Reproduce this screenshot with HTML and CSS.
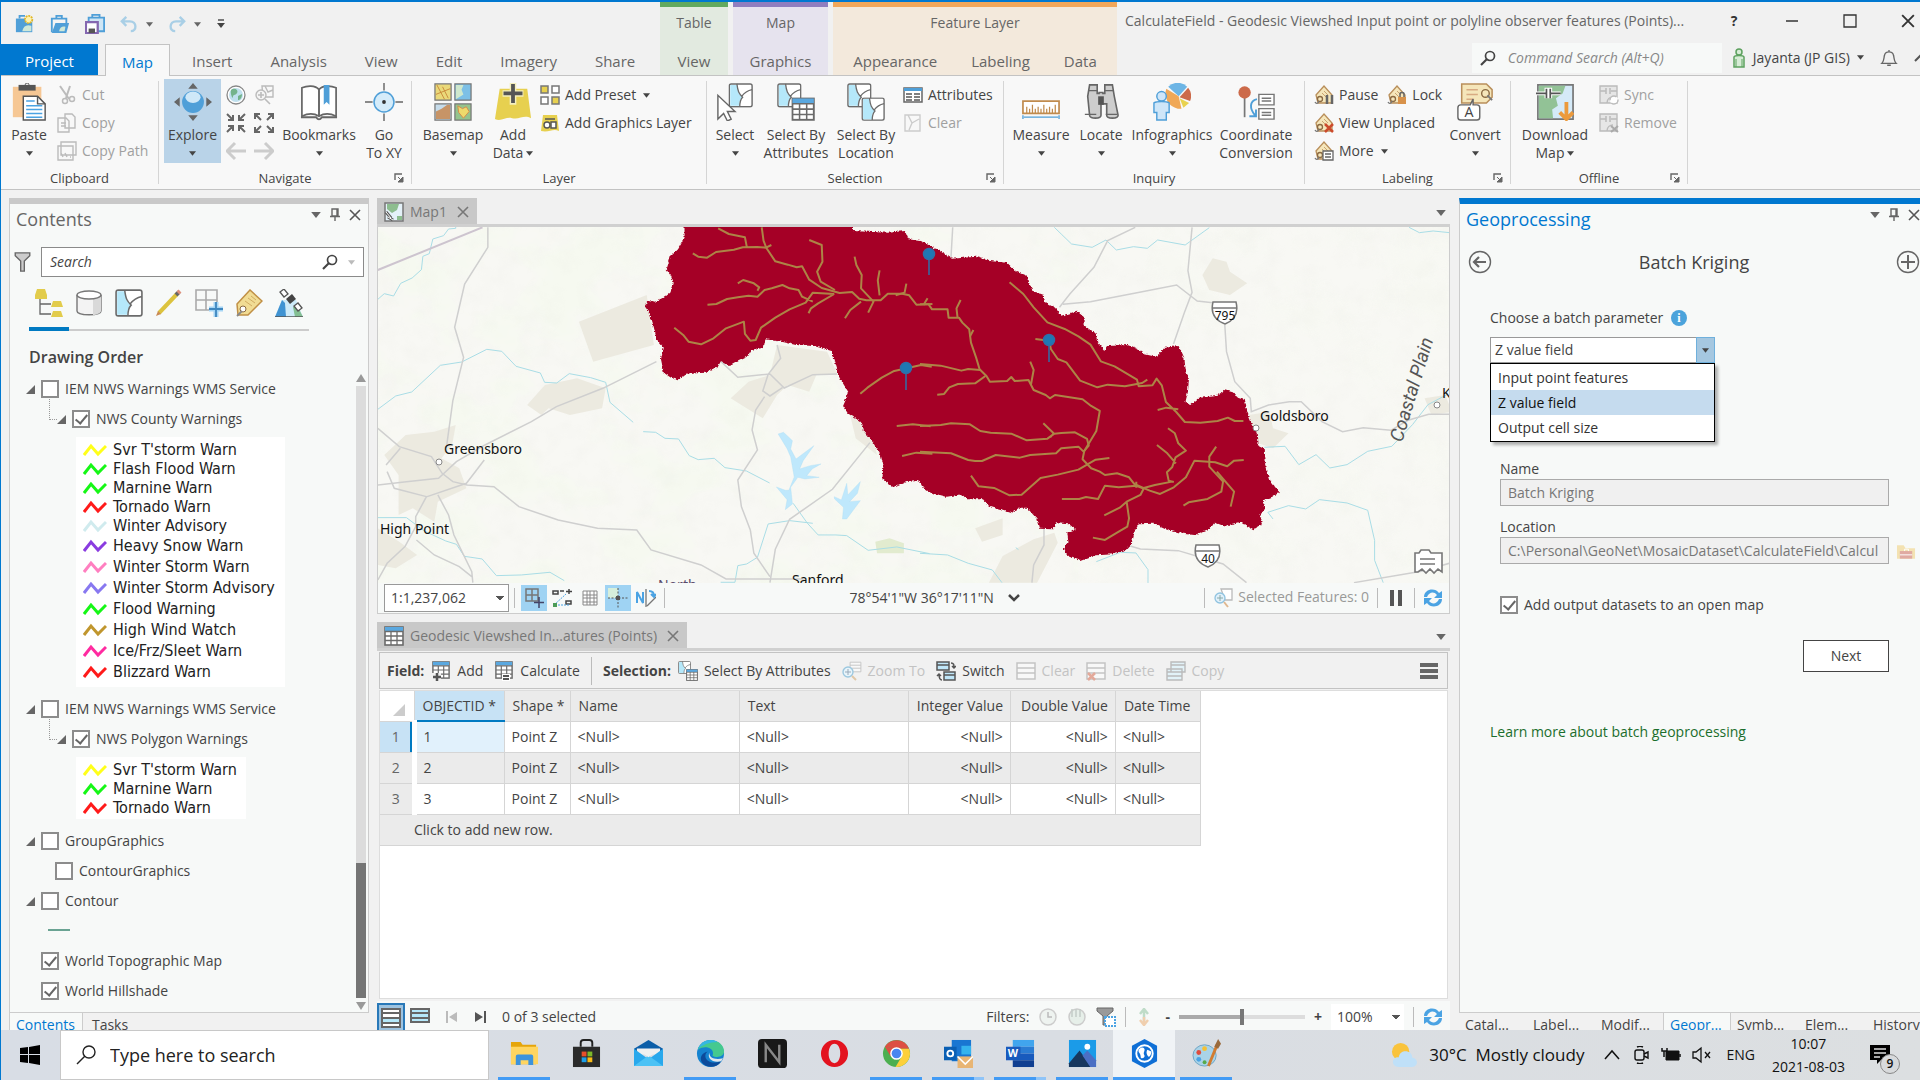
FILE: index.html
```
<!DOCTYPE html>
<html lang="en">
<head>
  <meta charset="UTF-8">
  <title>CalculateField - Geodesic Viewshed</title>
  <link rel="stylesheet" href="styles.css">
</head>
<body>

  <!-- shared icons -->
  <svg class="sprite" aria-hidden="true">
    <symbol id="caret" viewBox="0 0 8 5"><path d="M0 0h8L4 5z" fill="currentColor"/></symbol>
    <symbol id="launch" viewBox="0 0 10 10"><path d="M1 7V1h7" fill="none" stroke="#666" stroke-width="1.4"/><path d="M4 4l4 4M9 4v5H4z" fill="#666" stroke="#666"/></symbol>
    <symbol id="close" viewBox="0 0 12 12"><path d="M1 1l10 10M11 1L1 11" fill="none" stroke="currentColor" stroke-width="1.6"/></symbol>
    <symbol id="pin" viewBox="0 0 10 14"><path d="M2 1h6v7H2zM0 8.500h10M5 8v5M7 1v7" fill="none" stroke="#666" stroke-width="1.4"/></symbol>
    <symbol id="search" viewBox="0 0 16 16"><circle cx="10" cy="6" r="4.500" fill="none" stroke="currentColor" stroke-width="1.700"/><path d="M7 9l-6 6" stroke="currentColor" stroke-width="2.200"/></symbol>
    <symbol id="sheet" viewBox="0 0 26 26"><rect x="1" y="1" width="24" height="24" rx="2" fill="#fff" stroke="#6b6b6b" stroke-width="1.500"/><path d="M2 2h7c1 8 2 10 6 13-4 3-3 6-3 9H2z" fill="#b5e8fa"/><path d="M9 1c1 8 2 10 6 14-3 3-3 6-3 10M14 14c3-4 6-6 11-7" fill="none" stroke="#6b6b6b" stroke-width="1.400"/></symbol>
    <symbol id="grid" viewBox="0 0 20 20"><rect x="1" y="1" width="18" height="18" fill="#fff" stroke="#6b6b6b" stroke-width="1.600"/><path d="M1 1h18v4H1z" fill="#5aa8e0"/><path d="M1 5.500h18M1 10h18M1 14.500h18M7 5v14M13 5v14" stroke="#6b6b6b" stroke-width="1.300"/></symbol>
    <symbol id="rows" viewBox="0 0 20 20"><path d="M1 2h18v16H1zM1 7h18M1 12h18" fill="#f8f8f8" stroke="currentColor" stroke-width="1.500"/></symbol>
    <symbol id="tag" viewBox="0 0 20 20"><path d="M2 10L10 1l8 9v8H4z" fill="#f5e6ba" stroke="#b98f5b" stroke-width="1.300"/><path d="M8 8l5 5M10 6l4 4" stroke="#c9a36f"/><circle cx="6" cy="14" r="2.500" fill="#f5e6ba" stroke="#8b6a42" stroke-width="1.300"/><path d="M5 16c-1 3-3 3-4 1" fill="none" stroke="#777" stroke-width="1.300"/></symbol>
    <symbol id="refresh" viewBox="0 0 20 20"><path d="M1 9c0-8 11-10 15-4l3-2v7h-8l3-3C11 3 6 4 4 9z" fill="#4ba3e3"/><path d="M19 11c0 8-11 10-15 4l-3 2v-7h8l-3 3c3 4 8 3 10-2z" fill="#4ba3e3"/></symbol>
    <symbol id="zig" viewBox="0 0 24 14"><path d="M1 12L8 3l7 8 8-8" fill="none" stroke="currentColor" stroke-width="3"/></symbol>
    <symbol id="open" viewBox="0 0 9 9"><path d="M9 0v9H0z" fill="#666"/></symbol>
    <symbol id="offmap" viewBox="0 0 20 20"><path d="M1 1h17v17H1z" fill="#e6e6e6" stroke="#bbb" stroke-width="1.400"/><path d="M1 6h6M12 6h6M7 3v6M11 3v6M8 18c0-4 3-6 6-6" fill="none" stroke="#bbb" stroke-width="1.500"/></symbol>
  </svg>

  <div class="app">

    <header class="titlebar">
      <div class="title-left">
        <div class="quick">
          <button aria-label="New project"><svg class="i20" viewBox="0 0 22 22"><path d="M1 5h18v15H1z" fill="#4f9fd8"/><path d="M5 5V2h6" fill="none" stroke="#4f9fd8" stroke-width="2"/><path d="M8 19c1-6 5-8 10-6v6z" fill="#cfe8d8"/><circle cx="15" cy="6" r="4" fill="#fff3b0" stroke="#e0b52a" stroke-width="2" stroke-dasharray="2 1"/></svg></button>
          <button aria-label="Open project"><svg class="i20" viewBox="0 0 22 22"><path d="M2 20V5h16v5" fill="#f4f4f4" stroke="#4f9fd8" stroke-width="2"/><path d="M7 5V2h6v3" fill="none" stroke="#4f9fd8" stroke-width="2"/><path d="M2 21l4-11h15l-3 11z" fill="#4f9fd8"/><path d="M10 19c1-5 4-6 7-5l-1 5z" fill="#cfe8d8"/></svg></button>
          <button aria-label="Save project"><svg class="i20" viewBox="0 0 22 22"><path d="M4 4h17v15H4z" fill="#cfe6f5" stroke="#4f9fd8" stroke-width="2"/><path d="M8 4V1h8v3" fill="none" stroke="#4f9fd8" stroke-width="2"/><path d="M1 9h13v12H1z" fill="#fff" stroke="#8467b0" stroke-width="2.500"/><path d="M4 16h7v5H4z" fill="#555"/></svg></button>
          <button aria-label="Undo"><svg class="i18" viewBox="0 0 20 20"><path d="M7 2L2 7l5 5M2 7h9c8 0 8 11 1 11" fill="none" stroke="#a9cfe6" stroke-width="2.600"/></svg><svg class="caret"><use href="#caret"/></svg></button>
          <button aria-label="Redo"><svg class="i18" viewBox="0 0 20 20"><path d="M13 2l5 5-5 5M18 7H9c-8 0-8 11-1 11" fill="none" stroke="#a9cfe6" stroke-width="2.600"/></svg><svg class="caret"><use href="#caret"/></svg></button>
          <button aria-label="Customize"><svg class="i10" viewBox="0 0 10 10"><path d="M2 1h6" stroke="#444" stroke-width="1.400"/><path d="M1 4h8L5 9z" fill="#444"/></svg></button>
        </div>
        <nav class="tabs">
          <button class="tab tab-project">Project</button>
          <button class="tab tab-active">Map</button>
          <button class="tab">Insert</button>
          <button class="tab">Analysis</button>
          <button class="tab">View</button>
          <button class="tab">Edit</button>
          <button class="tab">Imagery</button>
          <button class="tab">Share</button>
        </nav>
      </div>
      <div class="context context-table">
        <span>Table</span>
        <div class="context-tabs"><button class="tab">View</button></div>
      </div>
      <div class="context context-map">
        <span>Map</span>
        <div class="context-tabs"><button class="tab">Graphics</button></div>
      </div>
      <div class="context context-layer">
        <span>Feature Layer</span>
        <div class="context-tabs">
          <button class="tab">Appearance</button>
          <button class="tab">Labeling</button>
          <button class="tab">Data</button>
        </div>
      </div>
      <div class="title-right">
        <div class="caption">
          <h1>CalculateField - Geodesic Viewshed Input point or polyline observer features (Points)...</h1>
          <button class="help">?</button>
          <button aria-label="Minimize"><svg class="i14" viewBox="0 0 14 14"><path d="M1 7h12" stroke="#333" stroke-width="1.500"/></svg></button>
          <button aria-label="Maximize"><svg class="i14" viewBox="0 0 14 14"><path d="M1 1h12v12H1z" fill="none" stroke="#333" stroke-width="1.300"/></svg></button>
          <button aria-label="Close"><svg class="i14"><use href="#close"/></svg></button>
        </div>
        <div class="account">
          <label class="command"><svg class="i16"><use href="#search"/></svg><input type="text" placeholder="Command Search (Alt+Q)" aria-label="Command Search"></label>
          <button class="user"><svg class="user-icon" viewBox="0 0 14 20"><circle cx="7" cy="4" r="3" fill="#d7ecd6" stroke="#5da15f" stroke-width="1.500"/><path d="M2 9c1-2 9-2 10 0v10H2z" fill="#d7ecd6" stroke="#5da15f" stroke-width="1.500"/><path d="M4 11v8M10 11v8" stroke="#5da15f"/></svg>Jayanta (JP GIS)<svg class="caret"><use href="#caret"/></svg></button>
          <button aria-label="Notifications"><svg class="i18" viewBox="0 0 18 20"><path d="M1 16h16c-3-3-2-6-3-9-1-5-9-5-10 0-1 3 0 6-3 9zM7 18h4M9 1v2" fill="none" stroke="#666" stroke-width="1.500"/></svg></button>
          <svg class="i10" viewBox="0 0 10 10"><path d="M1 8l6-6 6 6" fill="none" stroke="#555" stroke-width="2"/></svg>
        </div>
      </div>
    </header>

    <section class="ribbon">
      <div class="group g-clipboard">
        <div class="tools">
          <button class="big w-56"><svg class="i40" viewBox="0 0 40 40"><path d="M3 4h30v32H3z" fill="#f6c794"/><path d="M9 2h18v6H9z" fill="#555"/><circle cx="18" cy="2" r="2" fill="none" stroke="#555"/><path d="M14 14h15l8 8v17H14z" fill="#fff" stroke="#555" stroke-width="1.500"/><path d="M29 14v8h8" fill="none" stroke="#555" stroke-width="1.500"/><path d="M17 19h9M17 24h17M17 28h17M17 32h17M17 36h17" stroke="#4ba3e3" stroke-width="1.600"/></svg>Paste<svg class="caret"><use href="#caret"/></svg></button>
          <div class="stack">
            <button class="small off"><svg class="i20" viewBox="0 0 20 20"><path d="M3 1l9 13M13 1L9 13" stroke="#bbb" stroke-width="2"/><circle cx="8" cy="16" r="2.500" fill="none" stroke="#bbb" stroke-width="1.500"/><circle cx="15" cy="14" r="2.500" fill="none" stroke="#bbb" stroke-width="1.500"/></svg>Cut</button>
            <button class="small off"><svg class="i20" viewBox="0 0 20 20"><path d="M8 1h7l3 3v11H8zM1 5h8l3 3v11H1zM4 10h5M4 13h5" fill="#f8f8f8" stroke="#bbb" stroke-width="1.400"/></svg>Copy</button>
            <button class="small off"><svg class="i20" viewBox="0 0 20 20"><path d="M4 1h15v13H4zM1 5h15v14H1zM4 12l2 4M8 12l2 4M13 16h1" fill="#f8f8f8" stroke="#bbb" stroke-width="1.400"/></svg>Copy Path</button>
          </div>
        </div>
        <footer>Clipboard</footer>
      </div>

      <div class="group g-navigate">
        <div class="tools">
          <button class="big w-58 pressed"><svg class="i40" viewBox="0 0 40 40"><path d="M15 6l5-6 5 6zM15 34l5 6 5-6zM6 15l-6 5 6 5zM34 15l6 5-6 5z" fill="#666"/><circle cx="20" cy="20" r="11.500" fill="#4f9fd8"/><ellipse cx="20" cy="15" rx="8" ry="6" fill="#cfe8f8"/></svg>Explore<svg class="caret"><use href="#caret"/></svg></button>
          <div class="navgrid">
            <button aria-label="Full extent"><svg class="i20" viewBox="0 0 20 20"><circle cx="10" cy="10" r="9" fill="#fff" stroke="#888" stroke-width="1.300"/><circle cx="10" cy="10" r="7" fill="#bfe0ee"/><path d="M5 5c3-3 8 0 6 3s-4 1-4 4-3-3-2-7zM12 11l4-2c0 4-2 6-4 6z" fill="#73b38b"/></svg></button>
            <button aria-label="Zoom to selection"><svg class="i20" viewBox="0 0 20 20"><path d="M8 1h11v11H9zM11 1l3 6 5-2" fill="none" stroke="#bbb" stroke-width="1.400"/><circle cx="7" cy="10" r="5" fill="#f4f4f4" stroke="#bbb" stroke-width="1.400"/><path d="M4 10h6M7 7v6M11 14l5 5" stroke="#bbb" stroke-width="1.600"/></svg></button>
            <button aria-label="Fixed zoom in"><svg class="i20" viewBox="0 0 20 20"><path d="M1 1l6 6M7 2v5H2M19 1l-6 6M13 2v5h5M1 19l6-6M7 18v-5H2M19 19l-6-6M13 18v-5h5" fill="none" stroke="#666" stroke-width="2"/></svg></button>
            <button aria-label="Fixed zoom out"><svg class="i20" viewBox="0 0 20 20"><path d="M1 1l6 6M1 6V1h5M19 1l-6 6M14 1h5v5M1 19l6-6M1 14v5h5M19 19l-6-6M19 14v5h-5" fill="none" stroke="#666" stroke-width="2"/></svg></button>
            <button aria-label="Previous extent"><svg class="i20" viewBox="0 0 20 20"><path d="M20 10H2M9 2l-8 8 8 8" fill="none" stroke="#ccc" stroke-width="3"/></svg></button>
            <button aria-label="Next extent"><svg class="i20" viewBox="0 0 20 20"><path d="M0 10h18M11 2l8 8-8 8" fill="none" stroke="#ccc" stroke-width="3"/></svg></button>
          </div>
          <button class="big w-80"><svg class="i40" viewBox="0 0 40 40"><path d="M20 7C16 2 7 3 2 5v30c6-3 13-3 18 0 5-3 12-3 18 0V5C33 3 24 2 20 7zv28" fill="#fff" stroke="#666" stroke-width="1.800"/><path d="M20 6v28" stroke="#666" stroke-width="1.500"/><path d="M25 2h6v21l-3-3-3 3z" fill="#4f9fd8"/><path d="M1 36h16c2 3 4 3 6 0h16" fill="none" stroke="#666" stroke-width="2"/></svg>Bookmarks<svg class="caret"><use href="#caret"/></svg></button>
          <button class="big w-50"><svg class="i40" viewBox="0 0 40 40"><path d="M20 0v8M20 32v8M0 20h8M32 20h8" stroke="#666" stroke-width="1.500"/><circle cx="20" cy="20" r="10.500" fill="#d5ecfa" stroke="#4f9fd8" stroke-width="1.600"/><circle cx="20" cy="20" r="2" fill="#333"/></svg>Go<br>To XY</button>
        </div>
        <footer>Navigate<svg class="launch"><use href="#launch"/></svg></footer>
      </div>

      <div class="group g-layer">
        <div class="tools">
          <button class="big w-74"><svg class="i40" viewBox="0 0 40 40"><g stroke="#777" stroke-width="1.300"><path d="M1 1h17v17H1z" fill="#ead97a"/><path d="M22 1h17v17H22z" fill="#7dc0e6"/><path d="M1 22h17v17H1z" fill="#c6dceb"/><path d="M22 22h17v17H22z" fill="#94c48d"/></g><path d="M3 2l8 15M2 12l15-6M9 4l6 12" stroke="#c98a3b" fill="none"/><path d="M23 2h8l-2 5 2 5-8 5z" fill="#cfe8cd"/><path d="M2 38V30l6-3 6-4h3v15z" fill="#c79467"/><path d="M25 24l5 3 4-2 3 5-6 7-5-6z" fill="#eeda6b" stroke="#d48a4c"/></svg>Basemap<svg class="caret"><use href="#caret"/></svg></button>
          <button class="big w-46"><svg class="i40" viewBox="0 0 40 40"><path d="M6 6h29l4 31c-8-4-12 2-20 0-6-2-11 4-18 1z" fill="#e7d04f"/><path d="M20 0v23M9 11h22" stroke="#f4eebc" stroke-width="7"/><path d="M20 1v20M10 11h20" stroke="#555" stroke-width="4"/></svg>Add<br><span>Data<svg class="caret"><use href="#caret"/></svg></span></button>
          <div class="stack stack-right">
            <button class="small"><svg class="i20" viewBox="0 0 20 20"><path d="M1 1h7v7H1zM12 12h7v7h-7z" fill="#e7d04f" stroke="#777" stroke-width="1.500"/><path d="M12 1h7v7h-7zM1 12h7v7H1z" fill="#fff" stroke="#777" stroke-width="1.500"/></svg>Add Preset<svg class="caret"><use href="#caret"/></svg></button>
            <button class="small"><svg class="i20" viewBox="0 0 20 20"><path d="M3 2h14l2 16c-6-3-10 2-18 0z" fill="#e7d04f"/><path d="M5 6h10M11 9h5v6h-5z" fill="#fff" stroke="#555" stroke-width="1.500"/><circle cx="7" cy="12" r="3" fill="#fff" stroke="#555" stroke-width="1.400"/></svg>Add Graphics Layer</button>
          </div>
        </div>
        <footer>Layer</footer>
      </div>

      <div class="group g-selection">
        <div class="tools">
          <button class="big w-56"><svg class="i40" viewBox="0 0 40 40"><use href="#sheet" x="13" y="0" width="26" height="26"/><path d="M2 13v25l6-6 4 8 4-2-4-8h8z" fill="#fff" stroke="#666" stroke-width="1.500"/></svg>Select<svg class="caret"><use href="#caret"/></svg></button>
          <button class="big w-66"><svg class="i40" viewBox="0 0 40 40"><use href="#sheet" x="0" y="0" width="26" height="26"/><use href="#grid" x="15" y="15" width="25" height="25"/></svg>Select By<br>Attributes</button>
          <button class="big w-74"><svg class="i40" viewBox="0 0 40 40"><use href="#sheet" x="0" y="0" width="26" height="26"/><use href="#sheet" x="15" y="15" width="25" height="25"/></svg>Select By<br>Location</button>
          <div class="stack">
            <button class="small"><svg class="i20" viewBox="0 0 20 20"><path d="M1 3h18v14H1z" fill="#fff" stroke="#666" stroke-width="1.500"/><path d="M1 3h18v3H1z" fill="#4f9fd8"/><path d="M3 9h6M11 9h6M3 12h6M11 12h6M3 15h6M11 15h6" stroke="#555" stroke-width="1.500"/></svg>Attributes</button>
            <button class="small off"><svg class="i20" viewBox="0 0 20 20"><path d="M2 2h15v16H2zM5 2l4 8-3 7M9 10l7-4" fill="none" stroke="#ccc" stroke-width="1.400"/></svg>Clear</button>
          </div>
        </div>
        <footer>Selection<svg class="launch"><use href="#launch"/></svg></footer>
      </div>

      <div class="group g-inquiry">
        <div class="tools">
          <button class="big w-66"><svg class="i40" viewBox="0 0 40 40"><path d="M1 19h38v13H1z" fill="#fff" stroke="#c08b4e" stroke-width="1.800"/><path d="M5 32v-7M8 32v-5M11 32v-9M14 32v-5M17 32v-7M20 32v-5M23 32v-9M26 32v-5M29 32v-7M32 32v-5M35 32v-9" stroke="#c08b4e" stroke-width="1.300"/><path d="M1 34v4M39 34v4M2 36h36" stroke="#4f9fd8" stroke-width="1.400"/></svg>Measure<svg class="caret"><use href="#caret"/></svg></button>
          <button class="big w-54"><svg class="i40" viewBox="0 0 40 40"><path d="M8 2h8v9h2v-1h4v1h2V2h8l2 12 4 20c0 4-12 4-12 0V22h-6v12c0 4-12 4-12 0L6 14z" fill="#cdcdcd" stroke="#666" stroke-width="1.700"/><path d="M17 14h6v9h-6z" fill="#555"/><path d="M7 8h9M24 8h9M3 33h12M25 33h12" stroke="#666" stroke-width="1.500"/></svg>Locate<svg class="caret"><use href="#caret"/></svg></button>
          <button class="big w-90"><svg class="i40" viewBox="0 0 40 40"><path d="M27 14L16 4a14 14 0 0 1 20 0z" fill="#6db5e5"/><path d="M27 14L14 6a16 16 0 0 0 12 21l4 0z" fill="#f0a857"/><path d="M28 15l9-10a14 14 0 0 1 2 14z" fill="#cc6a4a"/><path d="M28 16l10 5-6 5z" fill="#e9d24f"/><g fill="#cfe6f8" stroke="#4f9fd8" stroke-width="1.500"><circle cx="9" cy="14" r="5"/><path d="M1 21c3-2 13-2 16 0v10h-3v8H4v-8H1z"/></g></svg>Infographics<svg class="caret"><use href="#caret"/></svg></button>
          <button class="big w-80"><svg class="i40" viewBox="0 0 40 40"><path d="M8 12v24" stroke="#777" stroke-width="1.800"/><circle cx="8" cy="10" r="6.500" fill="#cc6a4a"/><path d="M23 12h16v11H23zM23 27h16v11H23zM26 16h10M26 19h10M26 31h10M26 34h10" fill="#fff" stroke="#777" stroke-width="1.500"/><path d="M21 17c-8 2-8 10-2 17m1-6v7h-7" fill="none" stroke="#4f9fd8" stroke-width="2"/></svg>Coordinate<br>Conversion</button>
        </div>
        <footer>Inquiry</footer>
      </div>

      <div class="group g-labeling">
        <div class="tools">
          <div class="stack">
            <div class="pair">
              <button class="small"><svg class="i20" viewBox="0 0 20 20"><use href="#tag"/><path d="M13 10v9M18 10v9" stroke="#666" stroke-width="2.500"/></svg>Pause</button>
              <button class="small"><svg class="i20" viewBox="0 0 20 20"><use href="#tag"/><path d="M11 12h8v7h-8z" fill="#d8924a"/><path d="M13 12V9c0-2 4-2 4 0v3" fill="none" stroke="#666" stroke-width="1.500"/></svg>Lock</button>
            </div>
            <button class="small"><svg class="i20" viewBox="0 0 20 20"><use href="#tag"/><path d="M11 11l8 8M19 11l-8 8" stroke="#cc4b2c" stroke-width="2.500"/></svg>View Unplaced</button>
            <button class="small"><svg class="i20" viewBox="0 0 20 20"><use href="#tag"/><path d="M9 10h10v9H9zM11 13h6M11 16h6" fill="#fff" stroke="#666" stroke-width="1.300"/></svg>More<svg class="caret"><use href="#caret"/></svg></button>
          </div>
          <button class="big w-66"><svg class="i40" viewBox="0 0 40 40"><path d="M6 1h26l6 6v8l-6 6H6z" fill="#f5e6ba" stroke="#b98f5b" stroke-width="1.600"/><path d="M11 7h12M11 12h12M11 17h8" stroke="#d8aa82" stroke-width="1.600"/><circle cx="31" cy="11" r="4" fill="none" stroke="#8b6a42" stroke-width="1.500"/><path d="M33 13l5 5" stroke="#777" stroke-width="2"/><path d="M5 23h10l3-6v6h4q3 0 3 3v10q0 3-3 3H5q-3 0-3-3V26q0-3 3-3z" fill="#fff" stroke="#666" stroke-width="1.500"/><text x="9" y="36" class="glyph-a">A</text></svg>Convert<svg class="caret"><use href="#caret"/></svg></button>
        </div>
        <footer>Labeling<svg class="launch"><use href="#launch"/></svg></footer>
      </div>

      <div class="group g-offline">
        <div class="tools">
          <button class="big w-80"><svg class="i40" viewBox="0 0 40 40"><path d="M2 2h37v36H2z" fill="#d5eaf8" stroke="#777" stroke-width="1.800"/><path d="M3 3h28l-3 8-7 5 2 8-6 4 1 9H3z" fill="#92c296"/><path d="M0 11h10M16 11h10M11 5v11M15 5v11" stroke="#fff" stroke-width="4"/><path d="M0 11h11M15 11h11M11 6v10M15 6v10" stroke="#555" stroke-width="1.800"/><path d="M32 20v18M25 31l7 7 7-7" fill="none" stroke="#ec9a3c" stroke-width="4"/></svg>Download<br><span>Map<svg class="caret"><use href="#caret"/></svg></span></button>
          <div class="stack stack-right">
            <button class="small off"><svg class="i20" viewBox="0 0 20 20"><use href="#offmap"/><circle cx="15" cy="15" r="4" fill="#fff" stroke="#bbb" stroke-width="1.500" stroke-dasharray="9 3"/></svg>Sync</button>
            <button class="small off"><svg class="i20" viewBox="0 0 20 20"><use href="#offmap"/><path d="M12 13l7 6M19 13l-7 6" stroke="#aaa" stroke-width="2"/></svg>Remove</button>
          </div>
        </div>
        <footer>Offline<svg class="launch"><use href="#launch"/></svg></footer>
      </div>
    </section>

    <main class="workspace">

      <!-- Contents -->
      <aside class="pane contents">
        <div class="pane-body">
          <div class="pane-head"><h2>Contents</h2>
            <div class="pane-tools"><svg class="caret-lg"><use href="#caret"/></svg><svg class="pin"><use href="#pin"/></svg><svg class="i12"><use href="#close"/></svg></div>
          </div>
          <div class="filter-row">
            <svg class="funnel" viewBox="0 0 18 22"><path d="M1 1h16v3l-6 6v11H7V10L1 4z" fill="#ccc" stroke="#666" stroke-width="1.500"/></svg>
            <label class="searchbox"><input type="text" placeholder="Search" aria-label="Search contents"><svg class="i16"><use href="#search"/></svg><svg class="caret"><use href="#caret"/></svg></label>
          </div>
          <div class="views">
            <button class="on" aria-label="Drawing order"><svg class="i28" viewBox="0 0 28 28"><path d="M2 0h8l2 6v4H0V6zM18 12h8l2 6H16zM18 22h8l2 6H16z" fill="#e2cc4c"/><path d="M5 10v15h11M5 15h11" fill="none" stroke="#666" stroke-width="1.300"/></svg></button>
            <button aria-label="Data source"><svg class="i28" viewBox="0 0 28 28"><path d="M2 6v16c0 5 24 5 24 0V6" fill="#f3f3f3" stroke="#777" stroke-width="1.400"/><path d="M18 9c4 0 8-2 8-3v16c0 2-5 4-8 4z" fill="#d9d9d9"/><ellipse cx="14" cy="6" rx="12" ry="4" fill="#fff" stroke="#777" stroke-width="1.400"/></svg></button>
            <button aria-label="Selection"><svg class="i28"><use href="#sheet"/></svg></button>
            <button aria-label="Editing"><svg class="i28" viewBox="0 0 28 28"><path d="M4 24L22 5" stroke="#dcc33e" stroke-width="4"/><path d="M1 27l2-5 3 3z" fill="#c98b55"/><path d="M21 6l3-3" stroke="#666" stroke-width="4"/><path d="M23 4l2-2" stroke="#e0907c" stroke-width="4"/></svg></button>
            <button aria-label="Snapping"><svg class="i28" viewBox="0 0 28 28"><path d="M1 1h21v20H1zM11 1v20M1 11h21" fill="none" stroke="#aaa" stroke-width="1.600"/><path d="M14 20h14M21 13v15" stroke="#a6d6f5" stroke-width="5"/><path d="M14 20h14M21 13v15" stroke="#3f87bf" stroke-width="1.800"/></svg></button>
            <button aria-label="Labeling"><svg class="i28" viewBox="0 0 28 28"><path d="M2 15L15 1l12 11-14 14H3z" fill="#f1dc94" stroke="#c09046" stroke-width="1.500"/><path d="M10 12l7 5M13 9l7 5M16 7l5 4" stroke="#d1ac62"/><circle cx="8" cy="20" r="3" fill="#fff" stroke="#8b6a42"/><path d="M7 22l-5 5" stroke="#888" stroke-width="1.800"/></svg></button>
            <button aria-label="Imagery"><svg class="i28" viewBox="0 0 28 28"><path d="M7 11L0 28h28l-7-17z" fill="#cdeaf8"/><path d="M7 11L0 28h11l-1-14z" fill="#3f93d2"/><path d="M18 18l4-2 6 12h-8z" fill="#83bf93"/><path d="M0 28h28" stroke="#555" stroke-width="1.500"/><path d="M5 3l4-3 4 5-4 3zM19 17l4-3 4 5-4 3z" fill="#fff" stroke="#555" stroke-width="1.300"/><path d="M11 10l6-5 4 5-6 5z" fill="#444"/></svg></button>
          </div>
          <h3>Drawing Order</h3>
          <div class="tree-area">
            <ul class="tree">
              <li class="node"><svg class="open"><use href="#open"/></svg><label><input type="checkbox">IEM NWS Warnings WMS Service</label></li>
              <li class="node child"><svg class="open"><use href="#open"/></svg><label><input type="checkbox" checked>NWS County Warnings</label></li>
              <li>
                <ul class="legend">
                  <li class="yellow"><svg><use href="#zig"/></svg>Svr T'storm Warn</li>
                  <li class="green"><svg><use href="#zig"/></svg>Flash Flood Warn</li>
                  <li class="green"><svg><use href="#zig"/></svg>Marnine Warn</li>
                  <li class="red"><svg><use href="#zig"/></svg>Tornado Warn</li>
                  <li class="ice"><svg><use href="#zig"/></svg>Winter Advisory</li>
                  <li class="purple tall"><svg><use href="#zig"/></svg>Heavy Snow Warn</li>
                  <li class="pink tall"><svg><use href="#zig"/></svg>Winter Storm Warn</li>
                  <li class="violet tall"><svg><use href="#zig"/></svg>Winter Storm Advisory</li>
                  <li class="green tall"><svg><use href="#zig"/></svg>Flood Warning</li>
                  <li class="gold tall"><svg><use href="#zig"/></svg>High Wind Watch</li>
                  <li class="magenta tall"><svg><use href="#zig"/></svg>Ice/Frz/Sleet Warn</li>
                  <li class="red tall"><svg><use href="#zig"/></svg>Blizzard Warn</li>
                </ul>
              </li>
              <li class="node"><svg class="open"><use href="#open"/></svg><label><input type="checkbox">IEM NWS Warnings WMS Service</label></li>
              <li class="node child"><svg class="open"><use href="#open"/></svg><label><input type="checkbox" checked>NWS Polygon Warnings</label></li>
              <li>
                <ul class="legend legend-short">
                  <li class="yellow"><svg><use href="#zig"/></svg>Svr T'storm Warn</li>
                  <li class="green"><svg><use href="#zig"/></svg>Marnine Warn</li>
                  <li class="red"><svg><use href="#zig"/></svg>Tornado Warn</li>
                </ul>
              </li>
              <li class="node"><svg class="open"><use href="#open"/></svg><label><input type="checkbox">GroupGraphics</label></li>
              <li class="node leaf"><label><input type="checkbox">ContourGraphics</label></li>
              <li class="node"><svg class="open"><use href="#open"/></svg><label><input type="checkbox">Contour</label></li>
              <li class="node"><span class="line-symbol"></span></li>
              <li class="node flat"><label><input type="checkbox" checked>World Topographic Map</label></li>
              <li class="node flat"><label><input type="checkbox" checked>World Hillshade</label></li>
            </ul>
            <div class="scroll"><i class="up"></i><span class="track"><span class="thumb"></span></span><i class="down"></i></div>
          </div>
        </div>
        <nav class="pane-tabs"><button class="on">Contents</button><button>Tasks</button></nav>
      </aside>

      <!-- Map and attribute table -->
      <div class="center">
        <section class="doc">
          <div class="doc-tabs">
            <button class="doc-tab"><svg class="i20" viewBox="0 0 20 20"><path d="M1 1h18v18H1z" fill="#e4f1f8" stroke="#777" stroke-width="1.500"/><path d="M3 2h12l-2 6-5 3-5-4zM13 14h5v4h-5z" fill="#8dbd8f"/><path d="M2 10l5 6M4 15l5 3" stroke="#555" stroke-width="3"/><path d="M2 10l5 6M4 15l5 3" stroke="#fff"/></svg>Map1<svg class="i12"><use href="#close"/></svg></button>
            <svg class="caret-lg"><use href="#caret"/></svg>
          </div>
          <div class="map">
            <svg class="map-canvas" viewBox="0 0 1072 356" preserveAspectRatio="xMinYMin slice">
              <defs>
                <filter id="rough" x="-2%" y="-2%" width="104%" height="104%"><feTurbulence type="turbulence" baseFrequency="0.12" numOctaves="2" seed="4"/><feDisplacementMap in="SourceGraphic" scale="7" xChannelSelector="R" yChannelSelector="G"/></filter>
                <filter id="rougher" x="-2%" y="-2%" width="104%" height="104%"><feTurbulence type="turbulence" baseFrequency="0.1" numOctaves="2" seed="9"/><feDisplacementMap in="SourceGraphic" scale="6" xChannelSelector="R" yChannelSelector="G"/></filter>
                <filter id="woods" x="0" y="0" width="100%" height="100%"><feTurbulence type="fractalNoise" baseFrequency="0.013 0.018" numOctaves="5" seed="12"/><feColorMatrix values="0 0 0 0 .92  0 0 0 0 .95  0 0 0 0 .87  3.5 0 0 0 -1.5"/></filter>
                <filter id="relief" x="0" y="0" width="100%" height="100%"><feTurbulence type="fractalNoise" baseFrequency="0.05" numOctaves="3" seed="3"/><feColorMatrix values="0 0 0 0 .5  0 0 0 0 .5  0 0 0 0 .45  0 .5 0 0 -.21"/></filter>
              </defs>
              <rect width="1072" height="356" fill="#f8f8f4"/>
              <rect width="700" height="356" filter="url(#woods)"/>
              <rect x="700" width="372" height="356" filter="url(#woods)" opacity=".3"/>
              <rect width="1072" height="356" filter="url(#relief)" opacity=".2"/>

              <g transform="translate(-8 -32) scale(.3571 .3333)">
                <g class="urban">
                  <path d="M40 780l60-60 80-10 60-20-10 60-30 40 50 30 20 60-80 40-10 60-60-40-40 20v-120z"/>
                  <path d="M440 630l50-60 90-20 80 30-10 60-90 20-60-20-20 20z"/>
                  <path d="M585 380l190-80 20 150-170 50z"/>
                  <path d="M1140 450l140 20 30 70-60 0-20 50-60-20-30 30-40 70-60-40-30-20 50-50 60-20z"/>
                  <path d="M22 1000l60 40 50 40-60 40-50-10zM1340 640l60 60 20 80-60-50z"/>
                </g>
                <path class="park" d="M1415 1040l40-10 40 15v30l-75 0z"/>
                <g class="river">
                  <path d="M22 313l18-17 26 7 20-38 32-16 26-25 4-40 18-8 10-44 30-10 14-20 20-2v-8"/>
                  <path d="M22 643l50-40 45-12 80-80 60-10 70-38 42 6 40 45 68 20 12 28 34 2 35-28 60 12 42 14 12 60 65 60M765 710l35 2 26 18 38 2 30 50 25 12 45-4 30 28 60 10 65 36"/>
                  <path d="M22 968h80l50 40 60 30 30 10 22 36 50 8 40 50 70-2 80-8 40 25"/>
                  <path d="M1185 925l40 60 30 35 50 0 30 2 60 44 80-10 92 20M1240 985l-65-8-60 10-30 100-30 20-25 5-8 50-40 0"/>
                </g>
                <path class="border" d="M22 225L315 97"/>
                <g class="road">
                  <path d="M330 97v60l-65 110-28 130 25 90-30 130-18 140"/>
                  <path d="M22 700l60 55 90 30 30 50 30 25 40 10 75 5 70 60 110 40 110 25 110 5 40 60 140 45 70 42h220"/>
                  <path d="M22 870l80-10 90-10 50-50 80-50 130-70 70-45 130-55 150-80"/>
                  <path d="M160 905l110-40 50-70M45 810l40-50M48 830l20 50 90 25-30 60v30l-30 60-50 50-26 50M190 900l30 60 15 60 50 110 3 33M130 1035l50 45 70 35 35 30"/>
                  <path d="M980 497l50 50 90-10 40 42 80-40 68-2M1140 450l10 40-35 48-15 50 20 15 35-25M1105 605l-25 40-10 60 15 60-55 90 10 80 25 70 10 70 45 70M1120 1163l15-100 40-90 120-90 105-140"/>
                </g>
                <path class="lake" d="M1143 717l15-5 25 25-5 25 15 30 50-40-30 45-10 25 30-10 30-5-25 15-15 20 35 5-40 5-20-5-20 30 5 50-20 17 5-30-30-38 25 10 10 0 15-40-10-60 -10-25z"/>
                <path class="lake" d="M1300 905l20 10 15-50 3 35 35-40-8 35-22 25 30-3-38 55h-12l3-35-25-25z"/>
              </g>
              <g transform="translate(542 -32) scale(.3444 .3333)">
                <g class="urban">
                  <path d="M820 240l30-50 40 10 10 30 50 35-50 35-60-15z"/>
                  <path d="M955 660l60-10 10 50 45 15-45 45-55-20z"/>
                  <path d="M1465 610l60-10 20 50-60 10zM160 1000l80-30 0 50-60 20zM200 1163l40-80 90-50 60-20 10 30-60 120z"/>
                </g>
                <g class="river">
                  <path d="M390 97l20 20 30 30 60 10 40-22 30 30 50-10 40 5 30-25 80 15 70-52M1420 97l30 16 40-5 48 5"/>
                  <path d="M1000 757l60-3 40 55 50-30 40 40 50-10 60-40 70-15 60-65 45-60 55-30"/>
                  <path d="M1025 972l-15-20 60-20 50 10 40-28 80 10 60 22 20 90v60l25 67M512 1100l70-28 45 2 35 50v40M0 1075l80 5 60 25 70 20 28 38M278 1058l8 6"/>
                </g>
                <g class="road">
                  <path d="M95 97l-5 90M625 97l-80 40-40 80-70 80-30 40M415 328l80-8 150-30 100-20 60 48 45 5M790 97l-12 130 12 65-22 60-32 95M885 390l5 80 24 90 45 50 3 40 50-20 60-10h35l60 60 60 30 60-12 80 8 50-30 60-18h80M360 1000v50l-30 60-5 53M600 1050l40 12 110 5 130 40 68 56M1260 1163l200-35 80-24"/>
                </g>
              </g>

              <!-- raster extent -->
              <g transform="translate(-8 -32) scale(.3571 .3333)" fill="#a50026" filter="url(#rough)">
                <path d="M878 60v65l-18 35-20 20-12 42 12 18 8 25-10 25-23 20-20 10-17-5-10 18 12 17 10 35 10 45 20 25-8 35 8 40 20 15 22 8 18-16 30-5 30-2 30-15 10-20 25 15 25-15 25-13 10-17 35-10 5-25 45 7 40 10 50 3 50 15 10 35 12 45 26 45-16 40 13 22 40 28 5 25 30 40 18 35 7 30-3 40 33 25 35-17 30-3 46 25V155l-36-20-35-5-10-25-45 5-100-5V60z"/>
              </g>
              <g transform="translate(542 -32) scale(.3444 .3333)" fill="#a50026" filter="url(#rougher)">
                <path d="M0 140l25 18 25 4 40 26 70-6 40 13 50 5 25 25 35 15 5 25 15 25 25 5 5 25 30 15 20 27 45-15 20 18v25l35 25 5 25 20 25 10-15 55-3 30 13 20 15 35 8 25-28 38-5 17 40 3 30 10 30-3 40-7 30 17 7 25-22 50-5 25-17 25 7 10 15 20 7 8 38 12 30 18 35 2 35 18 10 2 30 5 35 10 30 27 35-22 15-25 10 5 25-15 20 8 25-28 18-35-23-45 12-30-12-15 20-40 18-50-6-40-12-35-17-40 2-15 25-8 35-17 20-35 10-50 3-45 17-40-15-10-20 13-20-3-28 25-10-20-17-35-3-10 18-40-2-7-28-28-32h-25l-20 14-65-20-20-22h-45l-15-12-45 7-40-10-25-17L0 865z"/>
              </g>

              <g class="stream" transform="translate(-8 -32) scale(.3571 .3333)">
                <path d="M904 175l15 10 25 3 25-17 50-7 25-7 40-1 25 2 15-8M975 100l30 17 45 10 5 28M1097 97l5 40 8 22 25 40 35 10 25 8 15-3 20 40 35 25 50 15 35-3 20 20 20 5h40l20-20h40l20 5 20 28 45-2"/>
                <path d="M1230 135l35 15 2 50-15 30 10 30 40 25M1357 185l5 25 15 30-2 40 35 40-15 33M1427 226l-5 30 5 45M1502 266l-5 27-25 8M1375 320l-30 25-15 25M1300 297l-60-4-20 30-45 20-40 25-40 30-15 37-15 2-15-20-3-37-50 20-35 30-35 18-35-8-15-20-25-22M1240 320l-30-15-10-20-25-5-20-10-30 10-20 5-20 20-25-3-30 5-30 5-30 15-25 2M1030 265l15-10 30 10 15 12-5 10M1300 297l-45 28-20 15-7 15"/>
                <path d="M1373 596l20-18 40-30 35-20 35-8 40-10 30 5M1475 693l45-5 50 6M1490 783l40-10 45 3"/>
              </g>
              <g class="stream" transform="translate(542 -32) scale(.3444 .3333)">
                <path d="M0 328h25l10 15h45l3 25h30l10 15 20 20 5 40 15 45 10 35 20 20 10 17 50-2 12-12 10 12 40-3 15 30 35 15 12 10 15-10 80 13 25 20 25 15-10 60-35 60-5 25 25 27 25 10 15 10 35-5 35 12 15 20 45 20 30 10 40-20 35-30 25-50 60 5 35 12 20-17 28-2"/>
                <path d="M118 315l-12 25 3 28M10 330l12-20M155 405l-10 20M0 507l60 5 60 15 20-5 35 3M190 543l-30 22-50 2-25 10-15 20-20 2M320 500l10 25-8 45M260 262l40 35 30 40 40 45 50 20 40 22 35 25 30 50 40 15 65 40 5 20 40-3 12-20 15 20 12 50 30 30 25 30 45 2 50-5 30-10 20 10h25M335 432l40 5 5 25 20 30 25 10 40 55 50 20 30-8 50 5 50-10 15-10M690 645l25-7 35 5"/>
                <path d="M0 693l60-3 30-5 55 3 30 20 30 5 60 3 45 20 60-5 20-15 20-2 40-2 35 20 5 20-15 18-15-15-50 5-15 15-75 5-30 8-70-8-40 18h-20l-20-3-50-20-90-5M358 685l30 30-10 12M148 842l22 32 45 5 45 22 35-2 55-50 50-10 60-15 50-30 40-5"/>
                <path d="M412 912h50l20-6 35 6 20-40 40 5 50-5 20 8 35-10 50-10M650 880l-10 20-40 20-20 18-45 23M600 920l7 50-5 25-25 15-40 25-35-7M628 860v18M720 700l20 15 10 30 22 22-30 20-10 30-15 15 5 25 15 4M688 750l30 25 25 30M860 755l-20 30v30l40 45-5 30-40 22-55 10-15 10M862 830l50 60-10 45"/>
              </g>

              <g fill="#1f78b4" stroke="#2f6fa8" stroke-width="1.500">
                <path d="M551 27v21M671 113v22M528 141v22"/>
                <circle cx="551" cy="27" r="5.500"/><circle cx="671" cy="113" r="5.500"/><circle cx="528" cy="141" r="5.500"/>
              </g>
              <g fill="#fff" stroke="#777" stroke-width="1.500">
                <path d="M835 75h23q4 16-11 22-16-6-12-22zM834 81h25M818 318h23q4 16-11 22-16-6-12-22zM817 324h25"/>
              </g>
              <g fill="#fff" stroke="#888"><circle cx="61" cy="235" r="3"/><circle cx="878" cy="201" r="3"/><circle cx="1059" cy="178" r="3"/></g>
              <g class="place">
                <text x="66" y="227">Greensboro</text>
                <text x="2" y="307">High Point</text>
                <text x="414" y="358">Sanford</text>
                <text x="280" y="363" class="forest">North</text>
                <text x="882" y="194">Goldsboro</text>
                <text x="1064" y="171">K</text>
                <text x="847" y="93" class="num">795</text>
                <text x="830" y="336" class="num">40</text>
                <text class="region" transform="translate(1024 216) rotate(-73)">Coastal Plain</text>
              </g>
              <path d="M1037 345v-19h4l2-3h8l2 3h11v19l-4-3-4 4-4-4-4 4-4-4-4 3zM1042 332h15M1042 337h15" fill="#fff" stroke="#777" stroke-width="1.600"/>
            </svg>
          </div>
          <div class="map-status">
            <select class="scale" aria-label="Map scale"><option>1:1,237,062</option></select>
            <span class="sep"></span>
            <button class="on" aria-label="Snapping"><svg class="i20" viewBox="0 0 20 20"><path d="M2 1h12v12H2zM8 1v12M2 7h12" fill="none" stroke="#777" stroke-width="1.500"/><path d="M15 9v11M10 14.500h10" stroke="#446" stroke-width="1.500"/></svg></button>
            <button aria-label="Constraints"><svg class="i20" viewBox="0 0 20 20"><path d="M1 3h5v3H1zM14 13h5v3h-5zM17 1v5M14 3.500h6M8 3h4" fill="none" stroke="#444" stroke-width="1.500"/><path d="M3 17h15M2 17L14 6" stroke="#4ba3e3" stroke-dasharray="2 1"/><path d="M1 15h4v4H1z" fill="#4c9c58"/></svg></button>
            <button aria-label="Grid"><svg class="i16" viewBox="0 0 16 16"><path d="M1 1h14v14H1zM1 5h14M1 8h14M1 12h14M5 1v14M8 1v14M12 1v14" fill="#fff" stroke="#888"/></svg></button>
            <button class="on" aria-label="Inference"><svg class="i20" viewBox="0 0 20 20"><path d="M0 0h10v10H0z" fill="#d6efdc"/><path d="M10 0v20M0 10h20" stroke="#555" stroke-dasharray="2 1.500"/><path d="M8 8h4v4H8z" fill="#555"/></svg></button>
            <button aria-label="Rotation"><svg class="i20" viewBox="0 0 20 20"><path d="M1 15V4l6 11V4" fill="none" stroke="#4ba3e3" stroke-width="2"/><path d="M10 1v18M11 18l9-9" stroke="#777" stroke-width="1.300"/><path d="M13 3c4 0 5 2 5 5m-3-2l3 3 2-3" fill="none" stroke="#4ba3e3" stroke-width="2"/></svg></button>
            <span class="sep"></span>
            <span class="coords">78°54'1"W 36°17'11"N <svg class="chev" viewBox="0 0 12 8"><path d="M1 1l5 5 5-5" fill="none" stroke="#444" stroke-width="2.500"/></svg></span>
            <span class="sep"></span>
            <span class="selected"><svg class="i20" viewBox="0 0 20 20"><path d="M8 1h11v11h-7z" fill="#fff" stroke="#bbb" stroke-width="1.300"/><circle cx="7" cy="10" r="5" fill="#e0f0fa" stroke="#8fc3e0" stroke-width="1.300"/><path d="M4 10h6M7 7v6" stroke="#8aa"/><path d="M11 14l4 5" stroke="#e0b890" stroke-width="2"/></svg>Selected Features: 0</span>
            <span class="sep"></span>
            <button class="plain" aria-label="Pause drawing"><svg class="i18" viewBox="0 0 18 18"><path d="M5 1v16M13 1v16" stroke="#555" stroke-width="4"/></svg></button>
            <span class="sep"></span>
            <button class="plain" aria-label="Refresh"><svg class="i20"><use href="#refresh"/></svg></button>
          </div>
        </section>

        <section class="doc doc-table">
          <div class="doc-tabs">
            <button class="doc-tab"><svg class="i20"><use href="#grid"/></svg>Geodesic Viewshed In...atures (Points)<svg class="i12"><use href="#close"/></svg></button>
            <svg class="caret-lg"><use href="#caret"/></svg>
          </div>
          <div class="toolbar">
            <b>Field:</b>
            <button><svg class="i20" viewBox="0 0 20 20"><use href="#grid" width="20" height="18"/><path d="M1 12h9v8H1z" fill="#f1f1f1"/><path d="M6 12v8M2 16h8" stroke="#555" stroke-width="2.500"/></svg>Add</button>
            <button><svg class="i20" viewBox="0 0 20 20"><use href="#grid" width="20" height="18"/><path d="M8 13h8v7H8z" fill="#fff"/><path d="M9 15h6M9 18h6" stroke="#555" stroke-width="2"/></svg>Calculate</button>
            <span class="sep"></span>
            <b>Selection:</b>
            <button><svg class="i20" viewBox="0 0 20 20"><use href="#sheet" width="13" height="13"/><use href="#grid" x="8" y="8" width="12" height="12"/></svg>Select By Attributes</button>
            <button class="off" disabled><svg class="i20" viewBox="0 0 20 20"><use href="#rows" x="7" width="13" height="12"/><circle cx="6" cy="11" r="5" fill="#e8f4fa" stroke="#9cc8e0" stroke-width="1.400"/><path d="M3 11h6M6 8v6" stroke="#9ab"/><path d="M10 15l4 4" stroke="#e0c8a8" stroke-width="2"/></svg>Zoom To</button>
            <button><svg class="i20" viewBox="0 0 20 20"><path d="M1 1h12v8H1zM8 11h11v8H8zM1 4h12M8 14h11" fill="#bfe6f8" stroke="#555" stroke-width="1.500"/><path d="M15 2c3 0 3 2 3 5m-2-2l2 2 2-2M6 19c-3 0-3-3-3-6m-2 2l2-2 2 2" fill="none" stroke="#555" stroke-width="1.500"/></svg>Switch</button>
            <button class="off" disabled><svg class="i20"><use href="#rows"/></svg>Clear</button>
            <button class="off" disabled><svg class="i20" viewBox="0 0 20 20"><use href="#rows"/><path d="M2 12l7 7M9 12l-7 7" stroke="#e3a99a" stroke-width="2.500"/></svg>Delete</button>
            <button class="off" disabled><svg class="i20" viewBox="0 0 20 20"><path d="M5 1h14v10H5zM1 8h15v11H1zM5 4h14M1 11h15M1 15h15" fill="#e2f2f8" stroke="#bbb" stroke-width="1.400"/></svg>Copy</button>
            <button class="menu" aria-label="Menu"><svg class="i20" viewBox="0 0 20 20"><path d="M1 4h18M1 10h18M1 16h18" stroke="#666" stroke-width="4"/></svg></button>
          </div>
          <div class="table-wrap">
            <table>
              <colgroup><col class="c-row"><col class="c-id"><col class="c-shape"><col class="c-text"><col class="c-text"><col class="c-int"><col class="c-dbl"><col class="c-date"></colgroup>
              <thead>
                <tr><th class="corner"><i></i></th><th class="sorted">OBJECTID *</th><th>Shape *</th><th>Name</th><th>Text</th><th class="r">Integer Value</th><th class="r">Double Value</th><th>Date Time</th></tr>
              </thead>
              <tbody>
                <tr><th class="cur">1</th><td class="sel">1</td><td>Point Z</td><td>&lt;Null&gt;</td><td>&lt;Null&gt;</td><td class="r">&lt;Null&gt;</td><td class="r">&lt;Null&gt;</td><td>&lt;Null&gt;</td></tr>
                <tr class="alt"><th>2</th><td>2</td><td>Point Z</td><td>&lt;Null&gt;</td><td>&lt;Null&gt;</td><td class="r">&lt;Null&gt;</td><td class="r">&lt;Null&gt;</td><td>&lt;Null&gt;</td></tr>
                <tr><th>3</th><td>3</td><td>Point Z</td><td>&lt;Null&gt;</td><td>&lt;Null&gt;</td><td class="r">&lt;Null&gt;</td><td class="r">&lt;Null&gt;</td><td>&lt;Null&gt;</td></tr>
                <tr class="alt new"><th></th><td colspan="7">Click to add new row.</td></tr>
              </tbody>
            </table>
          </div>
          <div class="table-status">
            <button class="on" aria-label="Show all records"><svg class="i20" viewBox="0 0 20 20"><path d="M1 1h18v18H1zM1 5h18M1 10h18M1 15h18" fill="#fff" stroke="#666" stroke-width="2"/><path d="M2 11h16v3H2z" fill="#b5e8fa"/></svg></button>
            <button aria-label="Show selected records"><svg class="i20" viewBox="0 0 20 20"><path d="M1 2h18v13H1zM1 6h18M1 11h18" fill="#b5e8fa" stroke="#666" stroke-width="2"/></svg></button>
            <button aria-label="First record"><svg class="i12" viewBox="0 0 12 12"><path d="M11 1v10L3 6zM0 0h2v12H0z" fill="#bbb"/></svg></button>
            <button aria-label="Last record"><svg class="i12" viewBox="0 0 12 12"><path d="M1 1v10l8-5zM10 0h2v12h-2z" fill="#555"/></svg></button>
            <span>0 of 3 selected</span>
            <span class="filters">Filters:</span>
            <svg class="i20" viewBox="0 0 20 20"><circle cx="10" cy="10" r="8" fill="#eef3f0" stroke="#ccc" stroke-width="1.500"/><path d="M10 5v5h4" fill="none" stroke="#bbb" stroke-width="1.500"/></svg>
            <svg class="i20" viewBox="0 0 20 20"><circle cx="10" cy="10" r="8" fill="#e6efe9" stroke="#ccc" stroke-width="1.500"/><path d="M5 2v8M9 2v8M13 2v8" stroke="#c4cdc8" stroke-width="1.500"/></svg>
            <svg class="i20" viewBox="0 0 20 20"><path d="M1 1h16v3l-6 5v9H7V9L1 4z" fill="#999" stroke="#666"/><path d="M9 10h10v9H9z" fill="#fff" stroke="#4ba3e3" stroke-width="2" stroke-dasharray="2 1"/></svg>
            <span class="sep"></span>
            <svg class="i18" viewBox="0 0 18 18"><path d="M9 2v14M5 6l4-5 4 5" fill="none" stroke="#bfdcc8" stroke-width="2.500"/><path d="M9 9v7M5 12l4 5 4-5" fill="none" stroke="#f0cfae" stroke-width="2.500"/></svg>
            <b class="minus">-</b>
            <input type="range" class="zoom" min="0" max="100" value="50" aria-label="Zoom">
            <b>+</b>
            <select class="percent" aria-label="Zoom percent"><option>100%</option></select>
            <span class="sep"></span>
            <svg class="i20"><use href="#refresh"/></svg>
          </div>
        </section>
      </div>

      <!-- Geoprocessing -->
      <aside class="pane gp">
        <div class="pane-body">
          <div class="pane-head"><h2>Geoprocessing</h2>
            <div class="pane-tools"><svg class="caret-lg"><use href="#caret"/></svg><svg class="pin"><use href="#pin"/></svg><svg class="i12"><use href="#close"/></svg></div>
          </div>
          <div class="gp-title">
            <button aria-label="Back"><svg class="i24" viewBox="0 0 24 24"><circle cx="12" cy="12" r="10.500" fill="none" stroke="#666" stroke-width="1.400"/><path d="M18 12H7M11 7l-5 5 5 5" fill="none" stroke="#666" stroke-width="2.200"/></svg></button>
            <h4>Batch Kriging</h4>
            <button aria-label="Add"><svg class="i24" viewBox="0 0 24 24"><circle cx="12" cy="12" r="10.500" fill="none" stroke="#666" stroke-width="1.400"/><path d="M12 5v14M5 12h14" stroke="#666" stroke-width="2"/></svg></button>
          </div>
          <form class="gp-form">
            <div class="label-row"><label for="param">Choose a batch parameter</label><svg class="i16" viewBox="0 0 16 16"><circle cx="8" cy="8" r="8" fill="#4ba3db"/><text x="8" y="12" class="info">i</text></svg></div>
            <div class="combo">
              <select id="param"><option>Z value field</option><option>Input point features</option><option>Output cell size</option></select>
              <span class="drop"><svg class="caret"><use href="#caret"/></svg></span>
              <ul class="options"><li>Input point features</li><li class="hot">Z value field</li><li>Output cell size</li></ul>
            </div>
            <div class="output">
              <label for="name">Name</label>
              <input type="text" id="name" value="Batch Kriging" readonly>
              <label for="location">Location</label>
              <div class="location">
                <input type="text" id="location" value="C:\Personal\GeoNet\MosaicDataset\CalculateField\Calcul" readonly>
                <svg class="folder" viewBox="0 0 20 20"><path d="M0 3h7l2 3h10v11H0z" fill="#f3e2b2"/><path d="M3 9h13v8H3z" fill="#e0aaa2"/><path d="M8 9V7h4v2M3 13h13" fill="none" stroke="#fff"/></svg>
              </div>
              <label class="check"><input type="checkbox" checked>Add output datasets to an open map</label>
              <button type="button" class="next">Next</button>
            </div>
            <a href="#">Learn more about batch geoprocessing</a>
          </form>
        </div>
        <nav class="pane-tabs gp-tabs"><button>Catal...</button><button>Label...</button><button>Modif...</button><button class="on">Geopr...</button><button>Symb...</button><button>Elem...</button><button>History</button></nav>
      </aside>
    </main>

    <footer class="taskbar">
      <button class="start" aria-label="Start"><svg class="i20" viewBox="0 0 20 20"><path d="M0 3l8-1v7H0zM9 2l11-2v9H9zM0 10h8v8l-8-1zM9 10h11v10L9 18z"/></svg></button>
      <label class="ask"><svg class="i20" viewBox="0 0 20 20"><circle cx="13" cy="7" r="6" fill="none" stroke="#222" stroke-width="1.400"/><path d="M9 11l-8 8" stroke="#222" stroke-width="1.500"/></svg><input type="text" placeholder="Type here to search" aria-label="Type here to search"></label>
      <div class="apps">
        <button class="run" aria-label="File Explorer"><svg viewBox="0 0 30 30"><path d="M1 3h10l2 3h14v20H1z" fill="#e5a50a"/><path d="M1 8h28v18H1z" fill="#ffd560"/><path d="M6 27v-9q0-2 2-2h14q2 0 2 2v9h-5v-5h-8v5z" fill="#3d93dc"/></svg></button>
        <button aria-label="Store"><svg viewBox="0 0 30 30"><path d="M9 8V4q0-3 3-3h6q3 0 3 3v4" fill="none" stroke="#222" stroke-width="2"/><path d="M1 8h28v21H1z" fill="#2b2b2b"/><path d="M10 13h5v5h-5z" fill="#e74f2b"/><path d="M16 13h5v5h-5z" fill="#7db829"/><path d="M10 19h5v5h-5z" fill="#1d9fe8"/><path d="M16 19h5v5h-5z" fill="#f8bb17"/></svg></button>
        <button aria-label="Mail"><svg viewBox="0 0 30 30"><path d="M0 10L15 1l15 9v4H0z" fill="#0c5ea8"/><path d="M3 10h24v6H3z" fill="#f0f0f0"/><path d="M0 10l15 11 15-11v18H0z" fill="#29a8ec"/><path d="M0 28l15-11 15 11z" fill="#4cc2f5"/><path d="M3 10h24L15 19z" fill="#f0f0f0"/></svg></button>
        <button class="run" aria-label="Edge"><svg viewBox="0 0 30 30"><circle cx="15" cy="15" r="14" fill="#1583d0"/><path d="M2 11C6-3 29-1 29 13c0 6-9 7-12 4 3-6-6-12-15-6z" fill="#45c98f"/><path d="M2 11C5 1 16-1 22 3 15 3 5 6 2 11z" fill="#35b7e2"/><path d="M12 13c-6 5 0 15 14 10-4 7-15 8-20 1-3-5 1-10 6-11z" fill="#0c4b9b"/><path d="M14 14c-1 5 5 8 14 6l-2 3c-9 2-15-3-12-9z" fill="#e0e5ec"/></svg></button>
        <button aria-label="Nitro"><svg viewBox="0 0 30 30"><rect width="30" height="30" rx="4" fill="#181818"/><path d="M8 24V6l14 18V6" fill="none" stroke="#888" stroke-width="2.500"/></svg></button>
        <button aria-label="Opera"><svg viewBox="0 0 30 30"><path d="M15 1a14 14 0 1 0 0 28 14 14 0 1 0 0-28zm0 4c8 0 8 20 0 20s-8-20 0-20z" fill="#e3131f" fill-rule="evenodd"/></svg></button>
        <button class="run" aria-label="Chrome"><svg viewBox="0 0 30 30"><circle cx="15" cy="15" r="14" fill="#4caf50"/><path d="M3 8a14 14 0 0 1 25 2H15z" fill="#dd4f43"/><path d="M28 10a14 14 0 0 1-14 19l7-12-4-7z" fill="#fdd03b"/><path d="M3 8l6 10 6-8z" fill="#dd4f43"/><circle cx="15" cy="15" r="6.500" fill="#fff"/><circle cx="15" cy="15" r="5" fill="#4886f0"/></svg></button>
        <button class="run multi" aria-label="Outlook"><svg viewBox="0 0 30 30"><path d="M8 1h20v22H8z" fill="#1976d2"/><path d="M18 7h10v9H18z" fill="#35b3ee"/><path d="M0 8h13v14H0z" fill="#0a5fb4"/><circle cx="6.500" cy="15" r="3" fill="none" stroke="#fff" stroke-width="2"/><path d="M14 18h16v12H14z" fill="#e8b574"/><path d="M14 18l8 8 8-8" fill="none" stroke="#fff" stroke-width="1.500"/></svg></button>
        <button class="run multi" aria-label="Word"><svg viewBox="0 0 30 30"><path d="M7 1h22v7H7z" fill="#41a5ee"/><path d="M7 8h22v7H7z" fill="#2b7cd3"/><path d="M7 15h22v7H7z" fill="#185abd"/><path d="M7 22h22v7H7z" fill="#103f91"/><path d="M0 8h15v14H0z" fill="#185abd"/><text x="7" y="19" class="word-w">W</text></svg></button>
        <button class="run" aria-label="Photos"><svg viewBox="0 0 30 30"><path d="M1 1h28v28H1z" fill="#1b9be8"/><path d="M1 25l11-13 12 17H1z" fill="#17375e"/><path d="M15 17l5-5 9 10v7H23z" fill="#4b6fc4"/><circle cx="20" cy="8" r="3" fill="#fff"/></svg></button>
        <button class="run active" aria-label="ArcGIS Pro"><svg viewBox="0 0 30 30"><path d="M15 0l13 7v16l-13 7L2 23V7z" fill="#0f6fd6"/><circle cx="15" cy="15" r="8.500" fill="none" stroke="#fff" stroke-width="2"/><path d="M9 11c3-4 7-2 6 1s-1 3 0 5-4 5-4 1-3-4-2-7zM18 11l4 2c0 4-2 6-3 5s-3-4-1-7z" fill="#fff"/></svg></button>
        <button class="run" aria-label="Paint"><svg viewBox="0 0 30 30"><ellipse cx="13" cy="17" rx="12" ry="11" fill="#a9d3e8" stroke="#6fa5c4"/><circle cx="7" cy="14" r="2.500" fill="#df4b3c"/><circle cx="13" cy="10" r="2.500" fill="#f5c034"/><circle cx="7" cy="21" r="2.500" fill="#4ba3e3"/><circle cx="13" cy="24" r="2" fill="#58ab4b"/><path d="M26 6L17 28" stroke="#d27c30" stroke-width="3"/><path d="M23 8l4-8 3 5-3 5z" fill="#9a6a3c"/></svg></button>
      </div>
      <div class="tray">
        <svg class="weather" viewBox="0 0 28 28"><circle cx="10" cy="10" r="9" fill="#f9c33c"/><path d="M8 26c-9-1-7-11 0-10 1-9 14-8 14 0 7 1 6 10 0 10z" fill="#bfe0f8"/></svg>
        <span class="temp">30°C&nbsp; Mostly cloudy</span>
        <svg class="i18" viewBox="0 0 18 18"><path d="M2 13l7-8 7 8" fill="none" stroke="#111" stroke-width="1.500"/></svg>
        <svg class="i18" viewBox="0 0 18 18"><rect x="3" y="4" width="9" height="10" rx="2" fill="none" stroke="#111" stroke-width="1.400"/><path d="M12 8l4-2v6l-4-2M5 1c2-1 4-1 6 0M5 17c2 1 4 1 6 0" fill="none" stroke="#111" stroke-width="1.400"/></svg>
        <svg class="i20" viewBox="0 0 20 18"><path d="M5 5h13v9H5z" fill="#111" stroke="#111"/><path d="M19 8v3M1 2v3h5V2M3 5v6" stroke="#111" stroke-width="1.500" fill="none"/></svg>
        <svg class="i20" viewBox="0 0 20 18"><path d="M1 6h3l5-4v14l-5-4H1zM13 6l5 6M18 6l-5 6" fill="none" stroke="#111" stroke-width="1.300"/></svg>
        <span class="lang">ENG</span>
        <span class="clock">10:07<br>2021-08-03</span>
        <span class="notes"><svg class="i20" viewBox="0 0 20 20"><path d="M0 0h20v15h-9l-4 4v-4H0z"/><path d="M4 4h12M4 8h12M4 12h6" stroke="#ddd" stroke-width="1.500"/></svg><em>9</em></span>
      </div>
    </footer>
  </div>

</body>
</html>
```
FILE: styles.css
```
* {
  box-sizing: border-box;
}
body {
  margin: 0;
  font-family: "Open Sans", "Noto Sans", sans-serif;
  font-size: 14px;
  line-height: 18px;
  color: #444;
  background: #f1f1f1;
}
button, input, select {
  font: inherit;
  color: inherit;
}
button {
  display: flex;
  align-items: center;
  padding: 0;
  border: none;
  background: none;
  white-space: nowrap;
}
h1, h2, h3, h4, ul {
  margin: 0;
  padding: 0;
  font-weight: normal;
  list-style: none;
}
svg {
  display: block;
  flex: none;
}
.sprite {
  position: absolute;
  width: 0;
  height: 0;
}
.i10 { width: 10px; height: 10px; }
.i12 { width: 12px; height: 12px; }
.i14 { width: 14px; height: 14px; }
.i16 { width: 16px; height: 16px; }
.i18 { width: 18px; height: 18px; }
.i20 { width: 20px; height: 20px; }
.i24 { width: 24px; height: 24px; }
.i28 { width: 28px; height: 28px; }
.i40 { width: 40px; height: 40px; }
.caret { width: 7px; height: 5px; }
.caret-lg { width: 10px; height: 6px; color: #666; }
.pin { width: 10px; height: 14px; }
.sep {
  width: 1px;
  height: 20px;
  background: #bbb;
  flex: none;
}

.app {
  display: flex;
  flex-direction: column;
  height: 100vh;
  overflow: hidden;
  border-top: 2px solid #0078d0;
  border-left: 1px solid #0078d0;
}

/* title bar */
.titlebar {
  display: flex;
  height: 74px;
  border-bottom: 1px solid #c3c3c3;
  color: #666;
  flex: none;
}
.title-left {
  width: 659px;
  display: flex;
  flex-direction: column;
}
.quick {
  display: flex;
  align-items: center;
  height: 42px;
  padding: 2px 0 0 14px;
  gap: 15px;
}
.quick button {
  gap: 8px;
}
.tabs {
  display: flex;
  height: 31px;
}
.tab {
  padding: 2px 19px 0;
  height: 31px;
  font-size: 15px;
}
.tab-project {
  width: 97px;
  justify-content: center;
  background: #0078d0;
  color: #fff;
}
.tab-active {
  width: 65px;
  height: 32px;
  justify-content: center;
  margin: 0 3px 0 7px;
  border: 1px solid #c3c3c3;
  border-bottom: none;
  background: #f8f8f8;
  color: #0078d0;
}
.context {
  display: flex;
  flex-direction: column;
  align-items: center;
  margin-right: 5px;
  border-top: 5px solid;
}
.context > span {
  height: 37px;
  padding-top: 7px;
}
.context-tabs {
  display: flex;
}
.context-table {
  width: 68px;
  background: #e2eae0;
  border-color: #62a95f;
}
.context-map {
  width: 95px;
  background: #e6e3ee;
  border-color: #907ebf;
}
.context-layer {
  width: 284px;
  background: #f3e9dc;
  border-color: #f2a75a;
}
.context .tab {
  padding: 2px 17px 0;
}
.title-right {
  flex: 1;
  display: flex;
  flex-direction: column;
  overflow: hidden;
}
.caption {
  display: flex;
  align-items: center;
  height: 39px;
}
.caption h1 {
  flex: 1;
  padding-left: 3px;
  font-size: 14px;
  white-space: nowrap;
}
.caption button {
  width: 58px;
  justify-content: center;
  color: #333;
}
.caption button:last-child {
  width: 41px;
  padding-left: 17px;
}
.caption .help {
  font-weight: bold;
}
.account {
  display: flex;
  align-items: center;
  justify-content: flex-end;
  height: 35px;
  margin-right: -4px;
  color: #444;
  gap: 16px;
}
.command {
  display: flex;
  align-items: center;
  gap: 10px;
  width: 250px;
  height: 30px;
  padding-left: 8px;
  background: #f7f9f8;
}
.command input {
  width: 200px;
  border: none;
  background: none;
  font-style: italic;
}
.command input::placeholder {
  color: #888;
}
.user {
  gap: 7px;
  margin-left: -6px;
}
.user-icon {
  width: 14px;
  height: 20px;
}

/* ribbon */
.ribbon {
  display: flex;
  height: 114px;
  flex: none;
  background: #f8f8f8;
  border-bottom: 1px solid #c3c3c3;
}
.group {
  display: flex;
  flex-direction: column;
  margin: 5px 0;
  border-right: 1px solid #d5d5d5;
}
.g-clipboard { width: 158px; }
.g-navigate { width: 253px; }
.g-layer { width: 295px; }
.g-selection { width: 297px; }
.g-inquiry { width: 301px; }
.g-labeling { width: 206px; }
.g-offline { width: 177px; }
.tools {
  flex: 1;
  display: flex;
}
.g-navigate .tools { padding-left: 5px; margin-top: -2px; }
.g-layer .tools { padding-left: 4px; }
.g-inquiry .tools { padding-left: 4px; }
.g-labeling .tools { padding-left: 9px; }
.g-offline .tools { padding-left: 4px; }
.group footer {
  position: relative;
  height: 15px;
  text-align: center;
  font-size: 13px;
}
.launch {
  position: absolute;
  right: 7px;
  top: 4px;
  width: 10px;
  height: 10px;
}
.big {
  flex-direction: column;
  height: 84px;
  padding-top: 2px;
}
.g-navigate .big { padding-top: 4px; }
.big .i40 {
  width: 38px;
  height: 38px;
  margin-bottom: 5px;
}
.big > .caret {
  margin-top: 7px;
}
.big span {
  display: flex;
  align-items: center;
  gap: 3px;
}
.w-46 { width: 46px; }
.w-50 { width: 50px; }
.w-54 { width: 54px; }
.w-56 { width: 56px; }
.w-58 { width: 57px; }
.w-66 { width: 66px; }
.w-74 { width: 74px; }
.w-80 { width: 80px; }
.w-90 { width: 88px; }
.pressed {
  background: #b9d3e8;
}
.stack {
  display: flex;
  flex-direction: column;
}
.stack-right {
  padding-left: 4px;
}
.small {
  height: 28px;
  gap: 5px;
}
.small .caret {
  margin-left: 2px;
}
.off {
  color: #a0a0a0;
}
.pair {
  display: flex;
  gap: 9px;
}
.navgrid {
  display: grid;
  grid-template-columns: 20px 20px;
  column-gap: 8px;
  grid-auto-rows: 28px;
  padding: 2px 5px 0;
}
.glyph-a {
  font: 15px "Open Sans", sans-serif;
  fill: #444;
}

/* docked panes */
.workspace {
  flex: 1;
  display: flex;
  min-height: 0;
  padding: 8px 0 0 8px;
}
.pane {
  display: flex;
  flex-direction: column;
  overflow: hidden;
}
.contents { width: 360px; }
.gp { width: 461px; margin-left: 9px; }
.pane-body {
  flex: 1;
  display: flex;
  flex-direction: column;
  min-height: 0;
  border: 1px solid #ccc;
  border-top: 6px solid #c9c9c9;
  background: #f7f9f8;
}
.gp .pane-body {
  border-top-color: #0078d0;
  border-right: none;
}
.pane-head {
  display: flex;
  justify-content: space-between;
  height: 34px;
  padding: 3px 7px 0 6px;
}
.gp .pane-head {
  padding-right: 0;
}
.pane-head h2 {
  font-size: 18px;
  line-height: 24px;
  color: #666;
}
.gp h2 {
  color: #0078d0;
}
.pane-tools {
  display: flex;
  align-items: center;
  gap: 9px;
  height: 16px;
  color: #555;
}
.filter-row {
  display: flex;
  align-items: center;
  gap: 10px;
  padding: 9px 4px 0 4px;
}
.funnel {
  width: 17px;
  height: 20px;
}
.searchbox {
  flex: 1;
  display: flex;
  align-items: center;
  height: 30px;
  padding: 0 8px;
  gap: 10px;
  border: 1px solid #8a8a8a;
  background: #fff;
}
.searchbox input {
  flex: 1;
  min-width: 0;
  border: none;
  padding: 0;
  font-style: italic;
}
.searchbox input::placeholder {
  color: #444;
}
.searchbox .caret {
  color: #bbb;
}
.views {
  display: flex;
  align-self: flex-start;
  margin: 12px 0 0 19px;
  border-bottom: 2px solid #ccc;
}
.views button {
  width: 40px;
  height: 40px;
  padding-left: 6px;
  align-items: flex-start;
}
.views .on {
  border-bottom: 4px solid #007ac2;
  height: 42px;
  margin-bottom: -2px;
}
.contents h3 {
  margin: 15px 0 6px 19px;
  font-size: 16px;
  line-height: 22px;
  font-weight: 600;
}
.tree-area {
  flex: 1;
  display: flex;
  min-height: 0;
}
.tree {
  flex: 1;
  padding-left: 16px;
}
.node {
  display: flex;
  align-items: center;
  height: 30px;
  gap: 6px;
}
.node label, .check {
  display: flex;
  align-items: center;
  gap: 6px;
}
.open {
  width: 9px;
  height: 9px;
}
.child {
  padding-left: 23px;
}
.child::before {
  content: "";
  width: 7px;
  height: 20px;
  align-self: flex-start;
  margin: -5px -6px 0 0;
  border: dotted #999;
  border-width: 0 0 1px 1px;
}
.leaf { padding-left: 29px; }
.flat { padding-left: 15px; }
.line-symbol {
  width: 22px;
  height: 2px;
  margin: -2px 0 0 22px;
  background: #6aa393;
}
input[type="checkbox"] {
  appearance: none;
  width: 18px;
  height: 18px;
  margin: 0;
  border: 2px solid #8c8c8c;
  background: #fff;
  display: grid;
  place-items: center;
}
input[type="checkbox"]:checked::after {
  content: "";
  width: 5px;
  height: 10px;
  margin-top: -3px;
  border: solid #666;
  border-width: 0 2px 2px 0;
  transform: rotate(40deg);
}
.legend {
  width: 209px;
  height: 250px;
  margin: 3px 0 7px 50px;
  padding: 3px 0 0 7px;
  background: #fff;
  font-family: "DejaVu Sans Condensed", "DejaVu Sans", sans-serif;
  font-size: 16px;
  color: #222;
}
.legend-short {
  width: 170px;
  height: 62px;
}
.legend li {
  display: flex;
  align-items: center;
  gap: 6px;
  height: 19px;
  white-space: nowrap;
}
.legend .tall { height: 21px; }
.legend svg { width: 24px; height: 14px; }
.yellow svg { color: #ffff1a; }
.green svg { color: #16f716; }
.red svg { color: #ff1a1a; }
.ice svg { color: #d0ebee; }
.purple svg { color: #8a3ce0; }
.pink svg { color: #ff7fc0; }
.violet svg { color: #8878f0; }
.gold svg { color: #c0962e; }
.magenta svg { color: #ff2ba0; }

.scroll {
  width: 10px;
  margin-right: 2px;
  display: flex;
  flex-direction: column;
}
.up, .down {
  border: 5px solid transparent;
}
.up { border-top: none; border-bottom: 8px solid #999; margin-bottom: 4px; }
.down { border-bottom: none; border-top: 8px solid #999; margin: 4px 0 2px; }
.track {
  flex: 1;
  display: flex;
  align-items: flex-end;
  background: #dcdcdc;
}
.thumb {
  flex: 1;
  height: 22%;
  background: #757575;
}
.pane-tabs {
  display: flex;
  height: 17px;
  overflow: hidden;
}
.pane-tabs button {
  height: 24px;
  padding: 0 8px 0 9px;
}
.pane-tabs .on {
  color: #0078d0;
  background: #f7f9f8;
  border: solid #ccc;
  border-width: 0 1px;
  padding: 0 7px 0 6px;
}
.gp-tabs button, .gp-tabs .on {
  flex: none;
  width: 68px;
  padding: 0 0 0 6px;
}

/* document area */
.center {
  flex: 1;
  display: flex;
  flex-direction: column;
  min-width: 0;
  margin-left: 8px;
}
.doc-tabs {
  display: flex;
  align-items: flex-end;
  justify-content: space-between;
  border-bottom: 3px solid #d0d0d0;
  padding-right: 4px;
}
.doc-tabs > .caret-lg {
  margin-bottom: 8px;
}
.doc-tab {
  height: 26px;
  padding: 2px 8px 0 7px;
  gap: 6px;
  background: #c8c8c8;
  color: #777;
}
.doc-tab .i12 {
  margin-left: 4px;
}
.map {
  height: 356px;
  border: solid #ccc;
  border-width: 0 1px;
  overflow: hidden;
}
.map-canvas {
  width: 100%;
  height: 100%;
}
.urban path { fill: #eceae0; }
.park { fill: #e2ebcf; }
.river path, .road path, .stream path, .border {
  fill: none;
  vector-effect: non-scaling-stroke;
}
.border { stroke: #cdc4cf; stroke-width: 2px; }
.river path { stroke: #a9dde6; }
.road path { stroke: #cfcfcf; stroke-width: 1.5px; }
.stream path { stroke: #ad8446; stroke-width: 2px; stroke-linejoin: round; }
.lake {
  fill: #bfe8fc;
  stroke: #a9dcf2;
}
.place {
  font: 14px "Noto Sans", sans-serif;
  fill: #111;
}
.place .num {
  text-anchor: middle;
  font-size: 12px;
}
.place .region {
  font-family: Roboto, sans-serif;
  font-size: 19px;
  font-style: italic;
  fill: #555;
}
.place .forest { fill: #5a4a6a; }
.map-status {
  display: flex;
  align-items: center;
  gap: 5px;
  height: 31px;
  padding: 0 6px;
  border: 1px solid #ccc;
  border-top: none;
  background: #f7f9f8;
}
.map-status .sep {
  margin: 0 3px;
}
.map-status .scale + .sep {
  margin: 0 1px 0 0;
}
select {
  appearance: none;
  border: 1px solid #999;
  border-radius: 0;
}
.scale, .percent {
  background: #fff conic-gradient(from -35deg at 50% 100%, #555 70deg, transparent 0) no-repeat right 6px center / 7px 5px;
  background-image: conic-gradient(from -45deg at 50% 100%, transparent 0 0), linear-gradient(135deg, #555 50%, transparent 50%), linear-gradient(225deg, #555 50%, transparent 50%);
  background-size: 0 0, 4px 5px, 4px 5px;
  background-repeat: no-repeat;
  background-position: 0 0, right 4px center, right 8px center;
}
.scale {
  width: 125px;
  height: 28px;
  padding: 0 6px;
}
.map-status button {
  width: 26px;
  height: 26px;
  justify-content: center;
  margin-right: -3px;
}
.map-status .plain {
  margin: 0;
  width: 20px;
}
.map-status .on {
  background: #9fd3f3;
}
.coords {
  flex: 1;
  display: flex;
  justify-content: center;
  align-items: center;
  gap: 14px;
}
.chev {
  width: 12px;
  height: 8px;
}
.selected {
  display: flex;
  gap: 5px;
  color: #999;
}
.doc-table {
  flex: 1;
  display: flex;
  flex-direction: column;
  margin-top: 8px;
  min-height: 0;
}
.toolbar {
  display: flex;
  align-items: center;
  gap: 11px;
  height: 37px;
  margin: 1px 2px 0;
  padding: 0 8px 0 7px;
  border: 1px solid #c3c3c3;
}
.toolbar b {
  margin-right: -4px;
}
.toolbar button {
  gap: 6px;
}
.toolbar .sep {
  height: 28px;
}
.toolbar .off {
  color: #c3c3c3;
}
.toolbar .menu {
  margin-left: auto;
}
.table-wrap {
  flex: 1;
  margin: 1px 2px 0;
  border: 1px solid #ddd;
  background: #fff;
}
table {
  border-collapse: collapse;
  table-layout: fixed;
  width: 821px;
}
.c-row { width: 34px; }
.c-id { width: 90px; }
.c-shape { width: 66px; }
.c-text { width: 169px; }
.c-int { width: 102px; }
.c-dbl { width: 105px; }
.c-date { width: 85px; }
th, td {
  height: 31px;
  padding: 0 7px;
  border: 1px solid #d5d5d5;
  text-align: left;
  font-weight: normal;
  white-space: nowrap;
}
thead th {
  height: 30px;
  background: #ebebeb;
  border-top: none;
}
thead th:not(.corner) {
  padding-left: 8px;
}
tbody th {
  background: #ebebeb;
  text-align: center;
  color: #666;
  border-right: 5px solid #fff;
  border-left: none;
  padding: 0;
}
.alt td {
  background: #ebebeb;
}
th.r, td.r {
  text-align: right;
}
.corner, thead .corner {
  background: #fff;
  border-left: none;
}
.corner i {
  display: block;
  margin: 8px 0 0 6px;
  width: 0;
  border-left: 12px solid transparent;
  border-bottom: 12px solid #ccc;
}
thead .sorted {
  background: #c7e2f5;
  border-bottom: 2px solid #007ac2;
}
tbody .sel {
  background: #e1f1fc;
}
tbody .cur {
  background: #c7e2f5;
  box-shadow: inset -2px 0 #007ac2;
}
.new td {
  padding-left: 0;
  border-left: none;
}
.new th {
  border-right: none;
}
.table-status {
  display: flex;
  align-items: center;
  gap: 9px;
  height: 29px;
  margin-top: 2px;
  padding: 3px 7px 0 0;
  background: #f7f9f8;
}
.table-status .on {
  height: 28px;
  width: 28px;
  justify-content: center;
  border: 2px solid #2878b8;
  border-bottom: none;
  background: #9dc3e0;
  margin-right: -4px;
}
.table-status button + button {
  margin-right: 7px;
}
.filters {
  margin-left: auto;
}
.minus {
  margin-left: 3px;
}
.zoom {
  appearance: none;
  width: 126px;
  height: 16px;
  margin: 0;
  background: linear-gradient(90deg, #aaa 50%, #ddd 50%) no-repeat center / 100% 4px;
}
.zoom::-webkit-slider-thumb {
  appearance: none;
  width: 4px;
  height: 16px;
  background: #777;
}
.percent {
  width: 73px;
  height: 26px;
  border: none;
  padding: 0 6px;
}

/* geoprocessing */
.gp-title {
  display: flex;
  align-items: center;
  justify-content: space-between;
  padding: 12px 0 0 8px;
}
.gp-title h4 {
  font-size: 18px;
  line-height: 24px;
}
.gp-form {
  padding: 34px 31px 0 30px;
}
.label-row {
  display: flex;
  align-items: center;
  gap: 8px;
  height: 20px;
}
.combo {
  position: relative;
  width: 225px;
  margin-top: 9px;
}
.combo select {
  width: 100%;
  height: 26px;
  padding: 0 4px;
  background: #fff;
}
.drop {
  position: absolute;
  right: 0;
  top: 0;
  width: 19px;
  height: 26px;
  display: grid;
  place-items: center;
  background: #a5c7e0;
  border: 1px solid #6fb0dc;
}
.options {
  position: absolute;
  top: 26px;
  left: 0;
  right: 0;
  padding: 1px 0;
  border: 1px solid #000;
  background: #fff;
  box-shadow: 3px 3px 3px rgba(0, 0, 0, 0.3);
}
.options li {
  padding: 0 7px;
  line-height: 25px;
  color: #333;
}
.options .hot {
  background: #c5dbee;
  color: #111;
}
.output {
  display: flex;
  flex-direction: column;
  margin: 96px 0 0 10px;
}
.output > label {
  line-height: 20px;
}
.output input[type="text"] {
  flex: none;
  width: 100%;
  height: 27px;
  margin-bottom: 11px;
  padding: 0 7px;
  border: 1px solid #aaa;
  background: #f0f0f0;
  color: #777;
}
.location {
  display: flex;
  align-items: flex-start;
  gap: 8px;
  margin-right: -27px;
}
.output .location input {
  flex: 1;
}
.folder {
  width: 19px;
  height: 20px;
  margin-top: 5px;
}
.output .check {
  margin: 20px 0 25px;
}
.next {
  align-self: flex-end;
  justify-content: center;
  width: 86px;
  height: 32px;
  border: 1px solid #444;
  background: #fff;
}
.gp-form a {
  display: block;
  margin-top: 51px;
  color: #1b6e2c;
  text-decoration: none;
}
.info {
  font: bold 12px "Liberation Serif", serif;
  fill: #fff;
  text-anchor: middle;
}

/* taskbar */
.taskbar {
  display: flex;
  height: 50px;
  flex: none;
  margin-left: -1px;
  background: linear-gradient(90deg, #d8dde5, #d9dde3 55%, #dcdfe1);
  color: #111;
}
.start {
  width: 60px;
  justify-content: center;
}
.ask {
  display: flex;
  align-items: center;
  gap: 14px;
  width: 429px;
  padding-left: 15px;
  border: 1px solid #c8c8c8;
  background: #fff;
}
.ask input {
  border: none;
  padding: 0;
  font-size: 18px;
}
.ask input::placeholder {
  color: #222;
}
.apps {
  display: flex;
  margin-left: 4px;
}
.apps button {
  width: 62px;
  justify-content: center;
  padding-bottom: 3px;
  border: solid transparent;
  border-width: 0 5px;
}
.apps svg {
  width: 29px;
  height: 29px;
}
.apps .run {
  background: linear-gradient(#429bf5, #429bf5) no-repeat center bottom / 100% 3px;
}
.apps .multi {
  background: linear-gradient(90deg, #429bf5 80%, #8fc4f8 80%) no-repeat center bottom / 100% 3px;
}
.apps .active {
  border: none;
  background-color: #f0f3f6;
}
.word-w {
  font: bold 11px "Open Sans", sans-serif;
  fill: #fff;
  text-anchor: middle;
}
.tray {
  display: flex;
  align-items: center;
  gap: 11px;
  margin-left: auto;
  padding-right: 30px;
}
.weather {
  width: 27px;
  height: 27px;
}
.temp {
  font-size: 17px;
  margin-right: 8px;
}
.lang {
  margin-left: 3px;
}
.clock {
  text-align: center;
  line-height: 23px;
  margin: 0 14px 0 6px;
}
.notes {
  position: relative;
}
.notes em {
  position: absolute;
  left: 10px;
  top: 9px;
  width: 20px;
  height: 20px;
  border: 1px solid #888;
  border-radius: 50%;
  background: #d8dadc;
  font-size: 12px;
  font-style: normal;
  font-weight: 600;
  text-align: center;
}
```
